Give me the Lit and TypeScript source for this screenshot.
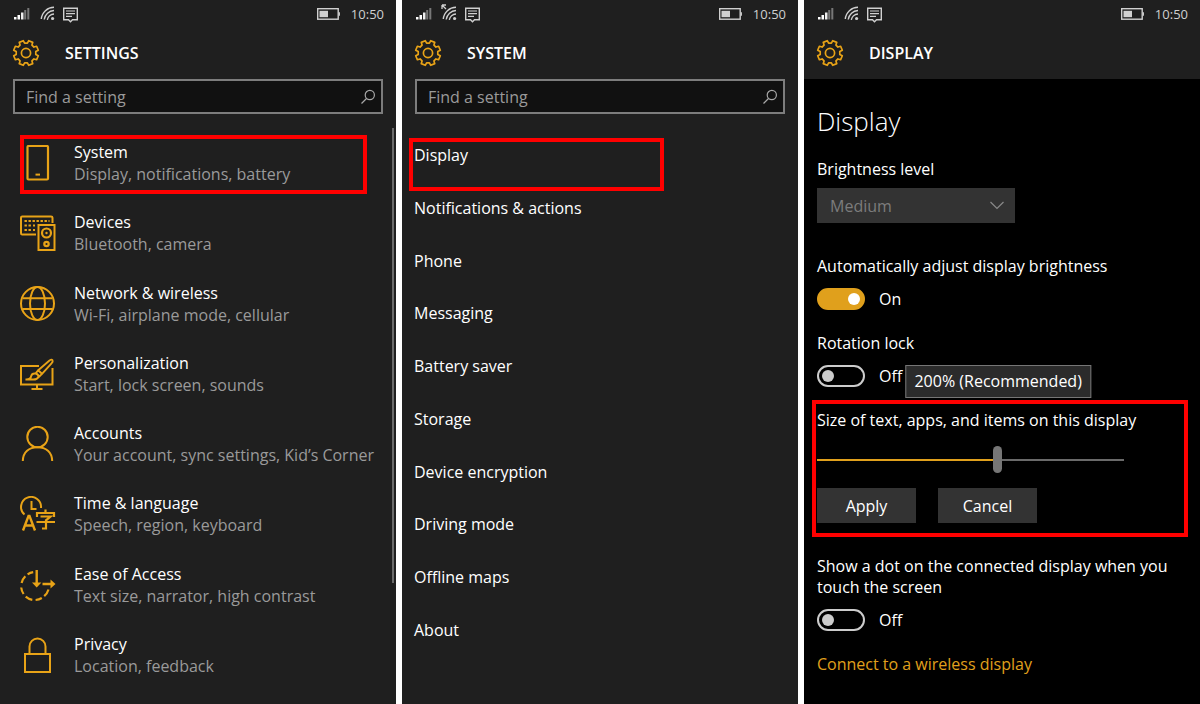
import { LitElement, html, css, svg, TemplateResult } from "lit";
import { customElement, property, state } from "lit/decorators.js";

/** Outline of a cog centred on (c, c), with a notch at each quarter turn. */
function cogPath(c: number, teeth: number, outer: number, inner: number): string {
  const step = (Math.PI * 2) / teeth;
  const at = (r: number, a: number) =>
    `${(c + r * Math.sin(a)).toFixed(2)} ${(c - r * Math.cos(a)).toFixed(2)}`;
  const points: string[] = [];
  for (let i = 0; i < teeth; i++) {
    const mid = (i + 0.5) * step;
    points.push(
      at(inner, mid - step * 0.32),
      at(outer, mid - step * 0.22),
      at(outer, mid + step * 0.22),
      at(inner, mid + step * 0.32)
    );
  }
  return `M${points.join("L")}Z`;
}

const COG = cogPath(14, 8, 12.6, 9.9);

const ICONS: Record<string, TemplateResult> = {
  system: svg`<rect x="7.5" y="1" width="20.5" height="33.5" rx="1" stroke-width="2.2"/><path d="M15.5 29.6h4.5" stroke-width="2"/>`,
  devices: svg`<path d="M16 19.500H2.200Q1 19.500 1 18.300V2.700Q1 1.500 2.200 1.500H31Q32.500 1.500 32.500 2.700V8" stroke-width="2"/>
    <path d="M4.500 6h25M4.500 10.500h7M13 10.500h2M4.500 15h7M13 15h2" stroke-width="2" stroke-dasharray="2.400 1.600"/>
    <rect x="18.500" y="10" width="16" height="25" stroke-width="2"/><circle cx="26.500" cy="18" r="4.500" stroke-width="2.200"/><circle cx="26.500" cy="18" r="1.200" fill="currentColor" stroke="none"/>
    <circle cx="26.500" cy="29" r="2.200" stroke-width="2.200"/>`,
  network: svg`<circle cx="17.500" cy="17.500" r="16.500"/><ellipse cx="17.500" cy="17.500" rx="7.500" ry="16.500"/><path d="M2.500 12.200h30M2.500 23h30"/>`,
  personalization: svg`<path d="M19 10H1V28.500H32.500V12M17 28.500V33M11.500 33h11"/>
    <path d="M29.200 4.700Q31.500 2.800 32.500 4.200 33.200 5.500 31.500 7.300L22 17.800l-3.800-3.600zM18.200 14.200l3.800 3.600-2.500 2.700-3.500-3.500zM15.700 17.500q3 1 2.800 3.500-1.500 3-6.500 2.500H5.500q5 .500 5.700-3.500.600-3 4.500-2.500z" stroke-width="1.900"/>`,
  accounts: svg`<circle cx="17.500" cy="11" r="10.200"/><path d="M2.800 35C3 26 9 21.200 17.500 21.200S32 26 32.200 35"/>`,
  time: svg`<path d="M4.500 18.500A10 10 0 1 1 21 12M11.500 5v8h5" stroke-width="2"/>
    <path d="M3 34.500 8.500 20h1L15 34.500M5 29.500h8" stroke-width="2.400"/>
    <path d="M25.500 13.500v3M17 21v-4h17v4M20.500 20.500h10L26 24.300v8.200H22M16.500 26h18.500" stroke-width="2.200"/>`,
  ease: svg`<path d="M13.200 5.200A14 14 0 0 0 7.600 7.300M5.300 9.300A14 14 0 0 0 1.600 16M1.200 20.500A14 14 0 0 0 3.600 27M5.700 29.600A14 14 0 0 0 12.300 32.800M15.600 33A14 14 0 0 0 21.800 31M24.200 29.200A14 14 0 0 0 28.500 22.500" stroke-width="2.200"/>
    <path d="M16.700 3v14M22.500 17h9" stroke-width="2.400"/><path d="M12 15.500h9.400l-4.700 5zM30.500 12.500l5 4.500-5 4.500z" fill="currentColor" stroke="none"/>`,
  privacy: svg`<rect x="5" y="17" width="25" height="18"/><path d="M9.500 17V9.500a8 8 0 0 1 16 0V17"/>`,
};

@customElement("status-bar")
class StatusBar extends LitElement {
  @property({ type: Boolean }) busy = false;

  static styles = css`
    :host { display: flex; align-items: center; height: 27px; padding: 0 12px 0 13px; color: #d0d0d0; }
    .icons { display: block; width: 68px; height: 22px; fill: none; stroke: currentColor; }
    .spacer { flex: 1; }
    .battery { display: block; width: 24px; height: 12px; margin-right: 11px; fill: none; stroke: currentColor; }
    .clock { font-size: 13px; line-height: 20px; }
  `;

  render() {
    return html`
      <svg class="icons" viewBox="0 0 68 22" role="img" aria-label="Signal, Wi-Fi and messages">
        <g fill="currentColor" stroke="none">
          <rect x="1" y="14" width="2.500" height="2.500" fill="#fff"/><rect x="4.500" y="12" width="2.500" height="4.500" fill="#fff"/>
          <rect x="8" y="9.500" width="2.500" height="7" fill="#eee"/><rect x="11.200" y="7" width="2" height="9.500" fill="#777"/><rect x="14.300" y="5" width="2" height="11.500" fill="#777"/>
        </g>
        <path d="M28.300 16A13 13 0 0 1 41 4.200M31.200 16.500A10.500 10.500 0 0 1 41 7.500M34.300 16.800A7 7 0 0 1 41 11" stroke-width="1.400"/>
        <circle cx="39.600" cy="15.500" r="1.600" fill="currentColor" stroke="none"/>
        ${this.busy ? svg`<path d="M27 2h4M27 2v4M27 2l4 4" stroke-width="1.300"/>` : null}
        <path d="M50.700 5.200H64.300V16.800H59.500L57.500 18.800 55.500 16.800H50.700z" stroke-width="1.400"/>
        <path d="M53 8h9M53 10.700h9M53 13.400h6" stroke-width="1.200"/>
      </svg>
      <span class="spacer"></span>
      <svg class="battery" viewBox="0 0 24 12" role="img" aria-label="Battery">
        <rect x="1.700" y=".700" width="20.500" height="10.500" stroke-width="1.400"/><rect x="3.500" y="2.800" width="8.500" height="6.400" fill="currentColor" stroke="none"/>
        <path d="M23.300 4.200v3.600" stroke-width="1.300"/>
      </svg>
      <span class="clock">10:50</span>
    `;
  }
}

@customElement("page-header")
class PageHeader extends LitElement {
  @property() heading = "";

  static styles = css`
    :host { display: flex; align-items: center; gap: 25px; height: 52px; padding: 0 12px; }
    .cog { display: block; width: 28px; height: 28px; fill: none; stroke: #e8a317; stroke-width: 1.7; stroke-linejoin: round; }
    .title { margin: 0; color: #fff; font-size: 16px; line-height: 22px; font-weight: 600; }
  `;

  render() {
    return html`
      <svg class="cog" viewBox="0 0 28 28" aria-hidden="true"><path d=${COG}/><circle cx="14" cy="14" r="4.600"/></svg>
      <h1 class="title">${this.heading}</h1>
    `;
  }
}

@customElement("search-box")
class SearchBox extends LitElement {
  static styles = css`
    :host { display: block; padding: 0 13px; }
    .field { display: flex; align-items: center; box-sizing: border-box; height: 35px; border: 2px solid #7d7d7d; background: #111; padding: 0 5px 0 11px; }
    .input { flex: 1; min-width: 0; padding: 0; border: 0; outline: 0; background: none; color: #fff; font: inherit; line-height: 22px; }
    .input::placeholder { color: #9a9a9a; opacity: 1; }
    .glass { display: block; width: 16px; height: 16px; fill: none; stroke: #a8a8a8; stroke-width: 1.200; }
  `;

  render() {
    return html`
      <label class="field">
        <input class="input" type="text" placeholder="Find a setting" aria-label="Find a setting" />
        <svg class="glass" viewBox="0 0 16 16" aria-hidden="true"><circle cx="9.800" cy="6" r="4.600"/><path d="M6.500 9.500 1.500 14.500"/></svg>
      </label>
    `;
  }
}

@customElement("toggle-switch")
class ToggleSwitch extends LitElement {
  @property() label = "";
  @property({ type: Boolean }) on = false;

  static styles = css`
    :host { display: block; }
    .label { display: block; padding-top: 1px; margin-bottom: 11px; line-height: 21px; }
    .row { display: flex; align-items: center; gap: 14px; height: 22px; }
    .switch { appearance: none; box-sizing: border-box; display: flex; align-items: center; width: 48px; height: 22px; margin: 0; padding: 0 3px; border: 2px solid #ccc; border-radius: 11px; }
    .switch::before { content: ""; width: 12px; height: 12px; border-radius: 50%; background: #ccc; }
    .switch:checked { justify-content: flex-end; border-color: #e0a01c; background: #e0a01c; }
    .switch:checked::before { background: #fff; }
  `;

  private flip(e: Event) {
    this.on = (e.target as HTMLInputElement).checked;
  }

  render() {
    return html`
      <label class="label" for="switch">${this.label}</label>
      <div class="row">
        <input id="switch" class="switch" type="checkbox" role="switch" .checked=${this.on} @change=${this.flip} />
        <span>${this.on ? "On" : "Off"}</span>
      </div>
    `;
  }
}

@customElement("scale-setting")
class ScaleSetting extends LitElement {
  @state() private value = 59;

  static styles = css`
    :host { display: block; position: relative; }
    .frame { position: absolute; inset: -9px -1px -14px -5px; border: 4px solid #f00; pointer-events: none; }
    .label { display: block; margin-bottom: 15px; }
    .slider { position: relative; width: 83%; height: 28px; margin-bottom: 14px; }
    .range { appearance: none; display: block; width: 100%; height: 28px; margin: 0; background: none; }
    .range::-webkit-slider-runnable-track {
      height: 2px;
      background: linear-gradient(to right, #e0a01c var(--fill), #6a6a6a var(--fill));
    }
    .range::-webkit-slider-thumb { appearance: none; width: 9px; height: 27px; margin-top: -13px; border-radius: 5px; background: #767676; }
    .tip { position: absolute; left: var(--fill); bottom: 76px; transform: translateX(-50%); box-sizing: border-box; height: 33px; padding: 4px 8px; border: 1px solid #767676; background: #2b2b2b; white-space: nowrap; line-height: 22px; }
    .actions { display: flex; gap: 22px; }
    .button { width: 99px; height: 35px; padding: 0; border: 0; background: #333; color: #fff; font: inherit; }
  `;

  private slide(e: Event) {
    this.value = Number((e.target as HTMLInputElement).value);
  }

  render() {
    return html`
      <label class="label" for="scale">Size of text, apps, and items on this display</label>
      <div class="slider" style="--fill: ${this.value}%">
        <input id="scale" class="range" type="range" min="0" max="100" .value=${String(this.value)} @input=${this.slide} />
        <output class="tip" for="scale">200% (Recommended)</output>
      </div>
      <div class="actions">
        <button class="button" type="button">Apply</button>
        <button class="button" type="button">Cancel</button>
      </div>
      <div class="frame"></div>
    `;
  }
}

const CATEGORIES = [
  { icon: "system", name: "System", detail: "Display, notifications, battery", marked: true },
  { icon: "devices", name: "Devices", detail: "Bluetooth, camera" },
  { icon: "network", name: "Network & wireless", detail: "Wi-Fi, airplane mode, cellular" },
  { icon: "personalization", name: "Personalization", detail: "Start, lock screen, sounds" },
  { icon: "accounts", name: "Accounts", detail: "Your account, sync settings, Kid’s Corner" },
  { icon: "time", name: "Time & language", detail: "Speech, region, keyboard" },
  { icon: "ease", name: "Ease of Access", detail: "Text size, narrator, high contrast" },
  { icon: "privacy", name: "Privacy", detail: "Location, feedback" },
];

const SYSTEM_PAGES = [
  "Display", "Notifications & actions", "Phone", "Messaging", "Battery saver",
  "Storage", "Device encryption", "Driving mode", "Offline maps", "About",
];

@customElement("app-root")
class AppRoot extends LitElement {
  static styles = css`
    :host {
      display: grid; grid-template-columns: repeat(3, minmax(0, 1fr)); gap: 6px;
      min-height: 100vh; background: #fff; color: #fff;
      font: 16px/22px "Open Sans", "Noto Sans", sans-serif;
    }
    .phone { display: flex; flex-direction: column; background: #1f1f1f; }
    .body { flex: 1; display: flex; flex-direction: column; position: relative; margin-top: 14px; }
    .list { flex: 1; display: grid; grid-auto-rows: 1fr; list-style: none; margin: 0; padding: 0; }
    .categories { margin-bottom: 14px; }
    .pages { margin: 1px 0 48px; }
    .entry { display: flex; position: relative; }
    .link { flex: 1; display: flex; align-items: center; color: #fff; text-decoration: none; }
    .categories .link { gap: 18px; padding-left: 20px; }
    .pages .link { padding-left: 12px; }
    .icon { display: block; width: 36px; height: 36px; fill: none; stroke: currentColor; stroke-width: 2; color: #e8a317; }
    .texts { display: flex; flex-direction: column; }
    .detail { color: #9a9a9a; }
    .marker { position: absolute; border: 4px solid #f00; pointer-events: none; }
    .categories .marker { inset: 7px 29px 4px 20px; }
    .pages .marker { inset: 9px 134px -9px 7px; }
    .scroll { position: absolute; top: 0; right: 2px; width: 2px; height: 79%; background: #6b6b6b; }
    .display { background: #000; }
    .top { background: #1f1f1f; }
    .settings { display: flex; flex-direction: column; gap: 22px; padding: 25px 13px 20px; }
    .heading { margin: 0 0 -2px; font-size: 26px; line-height: 34px; font-weight: 300; }
    .label { display: block; margin-bottom: 8px; }
    .brightness { margin-bottom: 10px; }
    .drop { position: relative; width: 198px; }
    .select { appearance: none; display: block; width: 100%; height: 35px; padding: 0 13px; border: 0; border-radius: 0; background: #333; color: #7c7c7c; font: inherit; opacity: 1; }
    .chevron { position: absolute; right: 11px; top: 13px; width: 14px; height: 9px; fill: none; stroke: #8a8a8a; stroke-width: 1.200; pointer-events: none; }
    .dot { margin-top: 10px; }
    .more { color: #e0a01c; text-decoration: none; }
  `;

  render() {
    return html`
      <section class="phone">
        <status-bar></status-bar>
        <page-header heading="SETTINGS"></page-header>
        <search-box></search-box>
        <div class="body">
          <ul class="list categories">
            ${CATEGORIES.map(
              (c) => html`<li class="entry">
                <a class="link" href="#${c.icon}">
                  <svg class="icon" viewBox="0 0 36 36" aria-hidden="true">${ICONS[c.icon]}</svg>
                  <span class="texts"><span>${c.name}</span><span class="detail">${c.detail}</span></span>
                </a>
                ${c.marked ? html`<div class="marker"></div>` : null}
              </li>`
            )}
          </ul>
          <div class="scroll"></div>
        </div>
      </section>
      <section class="phone">
        <status-bar busy></status-bar>
        <page-header heading="SYSTEM"></page-header>
        <search-box></search-box>
        <div class="body">
          <ul class="list pages">
            ${SYSTEM_PAGES.map(
              (name, i) => html`<li class="entry">
                <a class="link" href="#page-${i}">${name}</a>
                ${i === 0 ? html`<div class="marker"></div>` : null}
              </li>`
            )}
          </ul>
        </div>
      </section>
      <section class="phone display">
        <div class="top">
          <status-bar></status-bar>
          <page-header heading="DISPLAY"></page-header>
        </div>
        <div class="settings">
          <h2 class="heading">Display</h2>
          <div class="brightness">
            <label class="label" for="level">Brightness level</label>
            <div class="drop">
              <select id="level" class="select" disabled><option>Medium</option></select>
              <svg class="chevron" viewBox="0 0 14 9" aria-hidden="true"><path d="M.500 1 7 7.500 13.500 1"/></svg>
            </div>
          </div>
          <toggle-switch label="Automatically adjust display brightness" on></toggle-switch>
          <toggle-switch label="Rotation lock"></toggle-switch>
          <scale-setting></scale-setting>
          <toggle-switch class="dot" label="Show a dot on the connected display when you touch the screen"></toggle-switch>
          <a class="more" href="#wireless">Connect to a wireless display</a>
        </div>
      </section>
    `;
  }
}
